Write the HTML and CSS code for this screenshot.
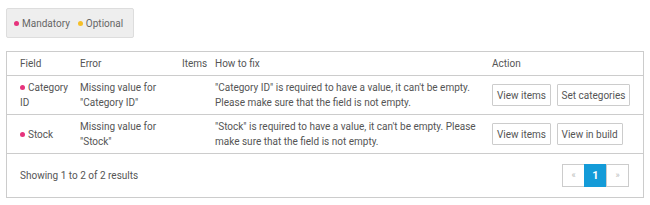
FILE: index.html
```html
<!DOCTYPE html>
<html lang="en">
<head>
    <meta charset="UTF-8">
    <title>Validation errors</title>
    <link rel="stylesheet" href="styles.css">
</head>
<body>
    <div class="legend">
        <span class="dot mandatory"></span>Mandatory
        <span class="dot optional"></span>Optional
    </div>

    <div class="panel">
        <table class="errors">
            <colgroup>
                <col class="c-field">
                <col class="c-error">
                <col class="c-items">
                <col class="c-fix">
                <col class="c-action">
            </colgroup>
            <thead>
                <tr>
                    <th>Field</th>
                    <th>Error</th>
                    <th>Items</th>
                    <th>How to fix</th>
                    <th>Action</th>
                </tr>
            </thead>
            <tbody>
                <tr>
                    <td><span class="dot mandatory"></span>Category ID</td>
                    <td>Missing value for "Category ID"</td>
                    <td></td>
                    <td>"Category ID" is required to have a value, it can't be empty. Please make sure that the field is not empty.</td>
                    <td class="actions">
                        <button class="btn">View items</button>
                        <button class="btn">Set categories</button>
                    </td>
                </tr>
                <tr>
                    <td><span class="dot mandatory"></span>Stock</td>
                    <td>Missing value for "Stock"</td>
                    <td></td>
                    <td>"Stock" is required to have a value, it can't be empty. Please make sure that the field is not empty.</td>
                    <td class="actions">
                        <button class="btn">View items</button>
                        <button class="btn">View in build</button>
                    </td>
                </tr>
            </tbody>
        </table>
        <div class="footer">
            <span>Showing 1 to 2 of 2 results</span>
            <ul class="pager">
                <li>&laquo;</li>
                <li class="active">1</li>
                <li>&raquo;</li>
            </ul>
        </div>
    </div>
</body>
</html>
```

FILE: styles.css
```css
body {
    margin: 0;
    padding: 8px 6px;
    font-family: Roboto, "Liberation Sans", sans-serif;
    font-size: 10px;
    color: #555;
    background: #fff;
}
.legend {
    display: inline-flex;
    align-items: center;
    height: 28px;
    padding: 0 10px 0 7px;
    background: #eee;
    border: 1px solid #ddd;
    border-radius: 2px;
    color: #666;
}
.dot {
    display: inline-block;
    width: 5px;
    height: 5px;
    border-radius: 50%;
    margin-right: 3px;
    vertical-align: 1px;
}
.legend .optional {
    margin-left: 8px;
}
.mandatory {
    background: #e6337c;
}
.optional {
    background: #f5bf27;
}
.panel {
    margin-top: 13px;
    border: 1px solid #ccc;
    width: 636px;
}
.errors {
    width: 100%;
    border-collapse: collapse;
    table-layout: fixed;
}
.c-field { width: 67px; }
.c-error { width: 102px; }
.c-items { width: 33px; }
.c-fix { width: 277px; }
.c-action { width: 157px; }
.errors th,
.errors td {
    text-align: left;
    font-weight: normal;
    padding: 0 6px;
    line-height: 15px;
    vertical-align: middle;
    border-bottom: 1px solid #ccc;
}
.errors th:first-child,
.errors td:first-child {
    padding-left: 13px;
    padding-right: 4px;
}
.errors th {
    height: 23px;
}
.errors td {
    height: 38px;
}
.actions {
    white-space: nowrap;
}
.btn {
    font-family: Roboto, "Liberation Sans", sans-serif;
    font-size: 10px;
    color: #555;
    background: #fff;
    border: 1px solid #ccc;
    border-radius: 1px;
    height: 22px;
    padding: 0 4px;
    margin-right: 3px;
}
.footer {
    display: flex;
    justify-content: space-between;
    align-items: center;
    height: 43px;
    padding: 0 14px 0 13px;
}
.pager {
    display: flex;
    list-style: none;
    margin: 0;
    padding: 0;
}
.pager li {
    width: 21px;
    height: 21px;
    line-height: 21px;
    text-align: center;
    border: 1px solid #ccc;
    color: #bbb;
    font-size: 9px;
}
.pager li + li {
    margin-left: -1px;
}
.pager .active {
    background: #149bd8;
    border-color: #149bd8;
    color: #fff;
    font-size: 11px;
    font-weight: bold;
}
```
